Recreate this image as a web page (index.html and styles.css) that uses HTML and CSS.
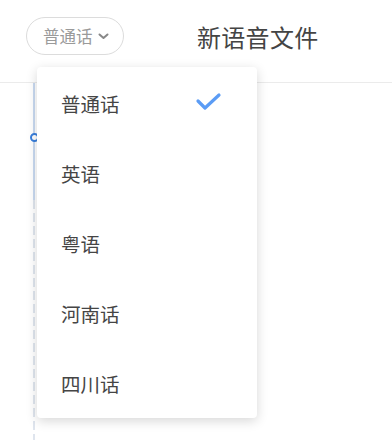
FILE: index.html
```html
<!DOCTYPE html>
<html lang="zh">
<head>
<meta charset="utf-8">
<link rel="stylesheet" href="styles.css">
</head>
<body>
<header class="header">
  <button class="pill">普通话<svg class="chev" width="11" height="7" viewBox="0 0 11 7"><path d="M1.5 1.5 L5.5 5 L9.5 1.5" fill="none" stroke="#888" stroke-width="2" stroke-linecap="round" stroke-linejoin="round"/></svg></button>
  <h1 class="title">新语音文件</h1>
</header>
<main class="content">
  <div class="timeline">
    <div class="solid"></div>
    <div class="dashed"></div>
    <span class="dot"></span>
  </div>
</main>
<ul class="menu">
  <li class="item">普通话<svg class="check" width="28" height="20" viewBox="0 0 28 20"><path d="M3 9 L10 16 L24 3" fill="none" stroke="#5b9cf5" stroke-width="3.2" stroke-linecap="round" stroke-linejoin="round"/></svg></li>
  <li class="item">英语</li>
  <li class="item">粤语</li>
  <li class="item">河南话</li>
  <li class="item">四川话</li>
</ul>
</body>
</html>
```
FILE: styles.css
```css
html, body {
  margin: 0;
  padding: 0;
  background: #fff;
  font-family: "Noto Sans CJK SC", "Noto Sans", sans-serif;
  width: 392px;
  height: 440px;
  overflow: hidden;
  position: relative;
}
.header {
  height: 82px;
  border-bottom: 1px solid #ebebeb;
  display: flex;
  align-items: center;
  padding-left: 26px;
  box-sizing: content-box;
}
.pill {
  display: flex;
  align-items: center;
  gap: 5px;
  height: 38px;
  width: 98px;
  padding: 0 0 0 16px;
  margin-top: -10px;
  border: 1px solid #dcdcdc;
  border-radius: 19px;
  background: #fff;
  color: #9a9a9a;
  font-family: "Noto Sans CJK SC", sans-serif;
  font-size: 16.5px;
  box-sizing: border-box;
}
.chev { margin-top: 1px; }
.title {
  margin: -10px 0 0 73px;
  font-size: 24px;
  font-weight: 400;
  color: #444;
  letter-spacing: 0.3px;
}
.content {
  height: 357px;
  padding-left: 33px;
}
.timeline {
  position: relative;
  width: 2px;
  height: 100%;
  display: flex;
  flex-direction: column;
}
.solid {
  height: 117px;
  background: #c9daf1;
}
.dashed {
  flex: 1;
  background: repeating-linear-gradient(to bottom, #dfe5ee 0 9px, transparent 9px 13px);
}
.dot {
  position: absolute;
  left: -3px;
  top: 50px;
  width: 5px;
  height: 5px;
  border: 2px solid #3a7fdc;
  border-radius: 50%;
  background: #fff;
}
.menu {
  position: absolute;
  left: 37px;
  top: 67px;
  width: 220px;
  margin: 0;
  padding: 1px 0 0;
  list-style: none;
  background: #fff;
  border-radius: 4px;
  box-shadow: 0 3px 12px rgba(0, 0, 0, 0.16);
}
.item {
  height: 70px;
  display: flex;
  align-items: center;
  justify-content: space-between;
  padding: 0 34px 0 24px;
  font-size: 19.5px;
  color: #454545;
}
.check { margin-top: -3px; }
```
